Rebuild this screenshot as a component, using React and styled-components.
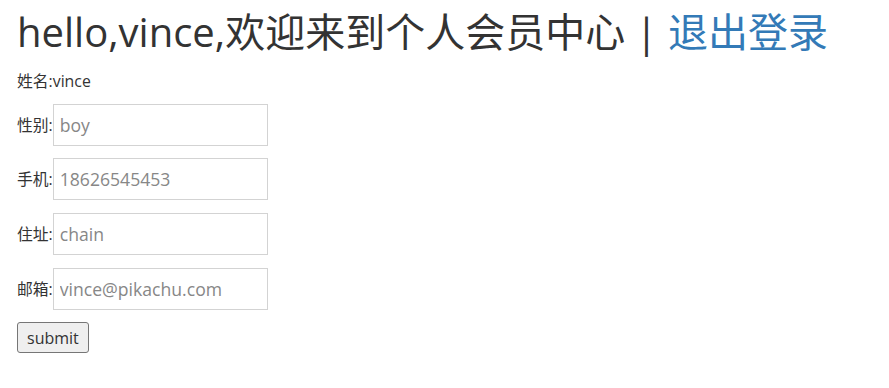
import React from 'react';
import styled, { createGlobalStyle } from 'styled-components';

const GlobalStyle = createGlobalStyle`
  body {
    margin: 0;
    background: #fff;
    color: #333;
    font-family: "Open Sans", "Noto Sans CJK SC", sans-serif;
  }
`;

const Page = styled.div`
  padding: 10px 15px 0 17px;
  display: flex;
  flex-direction: column;
  align-items: flex-start;
`;

const Title = styled.h1`
  margin: 0 0 17px 0;
  font-size: 40px;
  font-weight: 400;
  line-height: 44px;
  color: #333;
  white-space: nowrap;
`;

const Logout = styled.a`
  color: #337ab7;
  text-decoration: none;
`;

const Form = styled.form`
  display: flex;
  flex-direction: column;
  align-items: flex-start;
  gap: 12.67px;
`;

const Row = styled.div`
  display: flex;
  align-items: center;
  font-size: 15.8px;
  line-height: 20px;
`;

const Label = styled.label`
  font-size: 15.8px;
`;

const Field = styled.input`
  box-sizing: border-box;
  width: 215px;
  height: 42px;
  padding: 0 6px;
  border: 1px solid #d3d3d3;
  font-family: "Open Sans", "Noto Sans CJK SC", sans-serif;
  font-size: 17.6px;
  color: #333;
  outline: none;
  &::placeholder {
    color: #878787;
  }
`;

const Submit = styled.button`
  height: 31px;
  padding: 0 9px;
  font-family: "Open Sans", "Noto Sans CJK SC", sans-serif;
  font-size: 16px;
  color: #333;
  background: #efefef;
  border: 1px solid #767676;
  border-radius: 3px;
`;

const fields = [
  { label: '性别:', value: 'boy' },
  { label: '手机:', value: '18626545453' },
  { label: '住址:', value: 'chain' },
  { label: '邮箱:', value: 'vince@pikachu.com' },
];

export default function App() {
  return (
    <>
      <GlobalStyle />
      <Page>
        <Title>
          hello,vince,欢迎来到个人会员中心 | <Logout href="#">退出登录</Logout>
        </Title>
        <Form onSubmit={(e) => e.preventDefault()}>
          <Row>姓名:vince</Row>
          {fields.map((f) => (
            <Row key={f.label}>
              <Label>{f.label}</Label>
              <Field type="text" placeholder={f.value} />
            </Row>
          ))}
          <Submit type="submit">submit</Submit>
        </Form>
      </Page>
    </>
  );
}
